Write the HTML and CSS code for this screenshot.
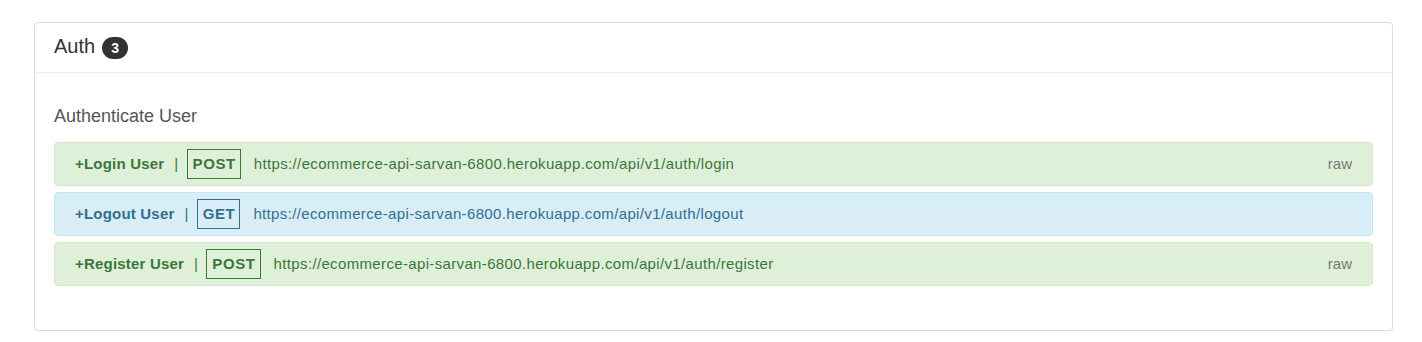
FILE: index.html
```html
<!DOCTYPE html>
<html>
<head>
<meta charset="utf-8">
<link rel="stylesheet" href="styles.css">
</head>
<body>
<div class="page">
  <div class="panel">
    <div class="panel-heading">
      <span class="panel-title">Auth</span>
      <span class="badge">3</span>
    </div>
    <div class="panel-body">
      <h4 class="group-title">Authenticate User</h4>
      <div class="endpoints">
        <div class="endpoint endpoint-post">
          <span class="ep-name">+Login User</span>
          <span class="ep-sep">|</span>
          <span class="ep-method">POST</span>
          <span class="ep-url">https://ecommerce-api-sarvan-6800.herokuapp.com/api/v1/auth/login</span>
          <span class="ep-raw">raw</span>
        </div>
        <div class="endpoint endpoint-get">
          <span class="ep-name">+Logout User</span>
          <span class="ep-sep">|</span>
          <span class="ep-method">GET</span>
          <span class="ep-url">https://ecommerce-api-sarvan-6800.herokuapp.com/api/v1/auth/logout</span>
        </div>
        <div class="endpoint endpoint-post">
          <span class="ep-name">+Register User</span>
          <span class="ep-sep">|</span>
          <span class="ep-method">POST</span>
          <span class="ep-url">https://ecommerce-api-sarvan-6800.herokuapp.com/api/v1/auth/register</span>
          <span class="ep-raw">raw</span>
        </div>
      </div>
    </div>
  </div>
</div>
</body>
</html>
```
FILE: styles.css
```css
* { box-sizing: border-box; }
html, body { margin: 0; padding: 0; background: #fff; }
body {
  font-family: "Liberation Sans", Arial, Helvetica, sans-serif;
  font-size: 14px;
  line-height: 1.42857;
  color: #333;
}
.page {
  padding: 22px 29px 0 34px;
}
.panel {
  border: 1px solid #ddd;
  border-radius: 4px;
  background: #fff;
  box-shadow: 0 1px 1px rgba(0,0,0,0.05);
}
.panel-heading {
  display: flex;
  align-items: center;
  gap: 7px;
  padding: 9px 19px 11px;
  border-bottom: 1px solid #eee;
  height: 50px;
}
.panel-title {
  font-size: 20px;
  line-height: 29px;
  color: #333;
}
.badge {
  display: inline-block;
  min-width: 26px;
  height: 22px;
  padding: 0 8px;
  border-radius: 11px;
  background: #333;
  color: #fff;
  font-size: 14px;
  font-weight: bold;
  line-height: 22px;
  text-align: center;
  margin-top: 2px;
}
.panel-body {
  padding: 20px 19px 44px;
}
.group-title {
  margin: 13px 0 16px;
  font-size: 18px;
  font-weight: normal;
  line-height: 20px;
  color: #555;
}
.endpoints {
  display: flex;
  flex-direction: column;
  gap: 6px;
}
.endpoint {
  display: flex;
  align-items: center;
  height: 44px;
  padding: 0 20px;
  border: 1px solid;
  border-radius: 4px;
  font-size: 15px;
  letter-spacing: 0.35px;
}
.endpoint-post {
  background: #dff0d8;
  border-color: #d6e9c6;
  color: #3c763d;
}
.endpoint-get {
  background: #d9edf7;
  border-color: #bce8f1;
  color: #31708f;
}
.ep-name {
  font-weight: bold;
  letter-spacing: 0.2px;
}
.ep-sep {
  margin: 0 8px 0 10px;
}
.ep-method {
  font-weight: bold;
  line-height: 20px;
  padding: 4px 4px 4px 5px;
  letter-spacing: 0.6px;
  border: 1px solid currentColor;
}
.ep-url {
  margin-left: 13px;
}
.ep-raw {
  margin-left: auto;
  color: #777;
  letter-spacing: 0;
}
```
